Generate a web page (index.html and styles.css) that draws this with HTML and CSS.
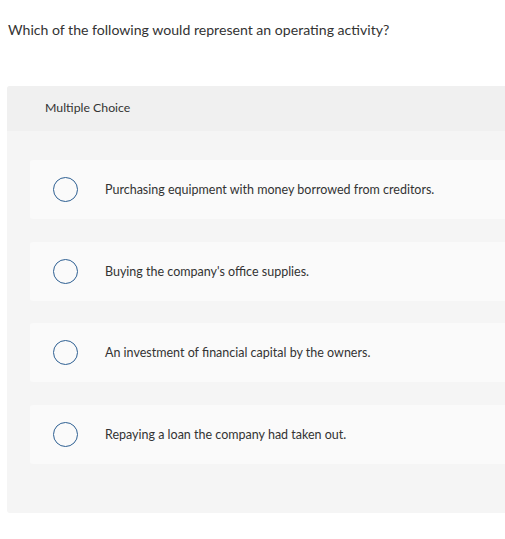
FILE: index.html
```html
<!DOCTYPE html>
<html>
<head>
<meta charset="utf-8">
<link rel="stylesheet" href="styles.css">
</head>
<body>
<p class="question">Which of the following would represent an operating activity?</p>
<div class="panel">
  <div class="panel-header">Multiple Choice</div>
  <div class="panel-body">
    <div class="option"><span class="radio"></span><span class="label">Purchasing equipment with money borrowed from creditors.</span></div>
    <div class="option"><span class="radio"></span><span class="label">Buying the company's office supplies.</span></div>
    <div class="option"><span class="radio"></span><span class="label">An investment of financial capital by the owners.</span></div>
    <div class="option"><span class="radio"></span><span class="label">Repaying a loan the company had taken out.</span></div>
  </div>
</div>
</body>
</html>
```
FILE: styles.css
```css
html, body {
  margin: 0;
  padding: 0;
  background: #ffffff;
  overflow: hidden;
}
body {
  font-family: "Lato", "Liberation Sans", sans-serif;
  color: #333333;
}
.question {
  margin: 0;
  padding: 22px 0 0 8px;
  height: 64px;
  box-sizing: border-box;
  font-size: 14.1px;
  line-height: 16px;
}
.panel {
  margin-left: 7px;
  margin-right: -10px;
  background: #f5f5f5;
  border-radius: 3px;
  margin-top: 22px;
}
.panel-header {
  height: 45px;
  background: #f0f0f0;
  display: flex;
  align-items: center;
  padding-left: 38px;
  padding-bottom: 2px;
  box-sizing: border-box;
  font-size: 12.3px;
  border-radius: 3px 3px 0 0;
}
.panel-body {
  padding: 29px 0 49px 23px;
  display: flex;
  flex-direction: column;
  gap: 22.7px;
}
.option {
  height: 59px;
  background: #fafafa;
  border-radius: 3px 0 0 3px;
  display: flex;
  align-items: center;
}
.radio {
  width: 23px;
  height: 23px;
  border: 1.5px solid #2d5f92;
  border-radius: 50%;
  margin-left: 23px;
  flex: none;
}
.label {
  margin-left: 27px;
  font-size: 12.5px;
}
```
